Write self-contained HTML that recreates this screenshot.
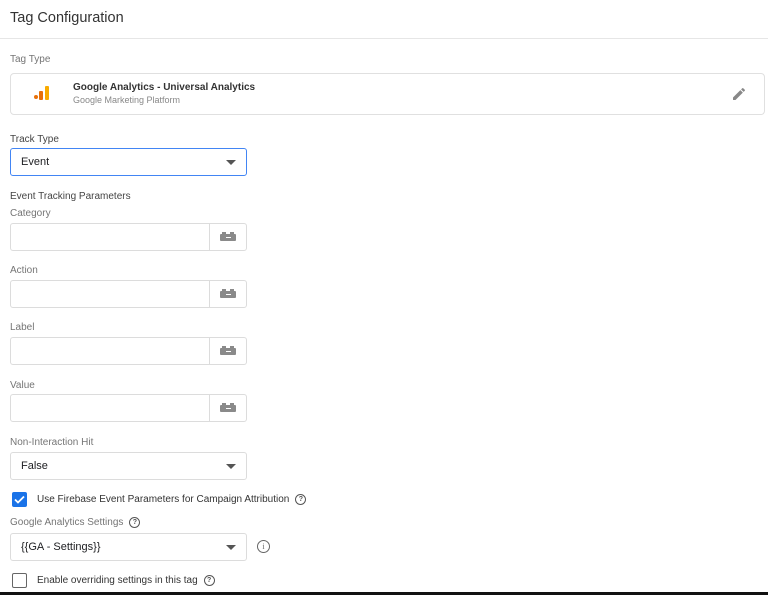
<!DOCTYPE html>
<html><head><style>
body{margin:0;width:768px;height:595px;background:#fff;font-family:"Liberation Sans",sans-serif;position:relative;overflow:hidden;color:#202124}
.a{position:absolute}
.lbl{position:absolute;left:10px;font-size:10px;color:#757575}
.in{position:absolute;left:10px;width:198px;height:26px;border:1px solid #dcdcdc;border-radius:3px 0 0 3px}
.bt{position:absolute;left:209px;width:36px;height:26px;border:1px solid #dcdcdc;border-radius:0 3px 3px 0}
.bt i{position:absolute;left:10px;top:10px;width:16px;height:7px;background:#8a8a8a;border-radius:1px}
.bt i:before{content:"";position:absolute;left:2px;top:-2px;width:4px;height:2px;background:#8a8a8a;box-shadow:8px 0 0 #8a8a8a}
.bt i:after{content:"";position:absolute;left:6px;top:3px;width:5px;height:1px;background:#fff}
.sel{position:absolute;left:10px;width:235px;height:26px;border:1px solid #dcdcdc;border-radius:3px;font-size:11px;line-height:26px;text-indent:10px}
.sel:after{content:"";position:absolute;right:10px;top:11px;border-left:5px solid transparent;border-right:5px solid transparent;border-top:5px solid #555}
.q{display:inline-block;width:9px;height:9px;border:1.3px solid #555;border-radius:50%;font-size:7px;line-height:9px;text-align:center;color:#555;font-weight:bold;vertical-align:middle;margin-left:6px}
</style></head><body>
<div class="a" style="left:10px;top:10px;font-size:14.5px;color:#333">Tag Configuration</div>
<div class="a" style="left:0;top:38px;width:768px;height:1px;background:#e6e6e6"></div>
<div class="lbl" style="top:54px">Tag Type</div>
<div class="a" style="left:10px;top:73px;width:753px;height:40px;border:1px solid #e0e0e0;border-radius:4px">
 <div class="a" style="left:23px;top:21px;width:4px;height:4px;border-radius:50%;background:#e8710a"></div>
 <div class="a" style="left:28px;top:17px;width:4px;height:9px;background:#e8710a;border-radius:1px"></div>
 <div class="a" style="left:34px;top:12px;width:4px;height:14px;background:#f9ab00;border-radius:1px"></div>
 <div class="a" style="left:62px;top:8px;font-size:10px;font-weight:bold;color:#333">Google Analytics - Universal Analytics</div>
 <div class="a" style="left:62px;top:21px;font-size:9px;color:#888">Google Marketing Platform</div>
 <svg class="a" style="left:720px;top:12px" width="16" height="16" viewBox="0 0 24 24"><path d="M3 17.25V21h3.75L17.8 9.94l-3.75-3.75zM20.7 7.04a1 1 0 000-1.41l-2.34-2.34a1 1 0 00-1.41 0l-1.83 1.83 3.75 3.75z" fill="#888"/></svg>
</div>
<div class="lbl" style="top:134px;color:#444">Track Type</div>
<div class="sel" style="top:148px;border:1.5px solid #4285f4;height:26px"><span>Event</span></div>
<div class="lbl" style="top:191px;color:#444">Event Tracking Parameters</div>
<div class="lbl" style="top:208px">Category</div><div class="in" style="top:223px"></div><div class="bt" style="top:223px"><i></i></div>
<div class="lbl" style="top:265px">Action</div><div class="in" style="top:280px"></div><div class="bt" style="top:280px"><i></i></div>
<div class="lbl" style="top:322px">Label</div><div class="in" style="top:337px"></div><div class="bt" style="top:337px"><i></i></div>
<div class="lbl" style="top:380px">Value</div><div class="in" style="top:394px"></div><div class="bt" style="top:394px"><i></i></div>
<div class="lbl" style="top:437px">Non-Interaction Hit</div>
<div class="sel" style="top:452px">False</div>
<div class="a" style="left:12px;top:492px;width:15px;height:15px;background:#1a73e8;border-radius:2px"><svg width="15" height="15" viewBox="0 0 15 15"><path d="M3 7.5l3 3 6-6" stroke="#fff" stroke-width="1.8" fill="none"/></svg></div>
<div class="a" style="left:37px;top:494px;font-size:10px;color:#333">Use Firebase Event Parameters for Campaign Attribution<span class="q">?</span></div>
<div class="lbl" style="top:517px">Google Analytics Settings<span class="q">?</span></div>
<div class="sel" style="top:533px">{{GA - Settings}}</div>
<div class="a" style="left:257px;top:540px;width:11px;height:11px;border:1.3px solid #666;border-radius:50%;font-size:8px;line-height:11px;text-align:center;color:#666;font-family:'Liberation Serif',serif">i</div>
<div class="a" style="left:12px;top:573px;width:13px;height:13px;border:1.5px solid #666;border-radius:2px"></div>
<div class="a" style="left:37px;top:575px;font-size:10px;color:#333">Enable overriding settings in this tag<span class="q">?</span></div>
<div class="a" style="left:0;top:592px;width:768px;height:3px;background:#111"></div>
</body></html>
